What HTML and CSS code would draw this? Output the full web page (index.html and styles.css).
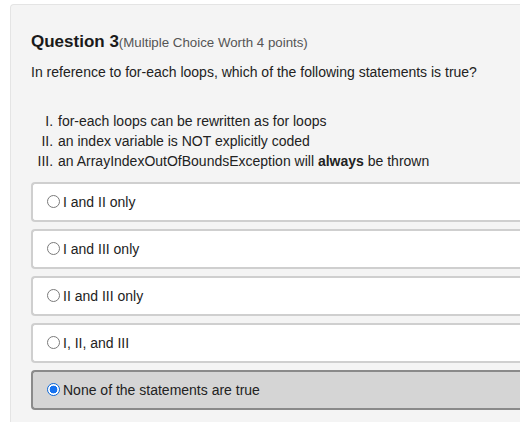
FILE: index.html
```html
<!DOCTYPE html>
<html>
<head>
<meta charset="utf-8">
<link rel="stylesheet" href="styles.css">
</head>
<body>
<div class="panel">
  <h2 class="title">Question 3<span class="meta">(Multiple Choice Worth 4 points)</span></h2>
  <p class="prompt">In reference to for-each loops, which of the following statements is true?</p>
  <ol class="statements">
    <li>for-each loops can be rewritten as for loops</li>
    <li>an index variable is NOT explicitly coded</li>
    <li>an ArrayIndexOutOfBoundsException will <b>always</b> be thrown</li>
  </ol>
  <div class="options">
    <label class="option"><span class="radio"></span>I and II only</label>
    <label class="option"><span class="radio"></span>I and III only</label>
    <label class="option"><span class="radio"></span>II and III only</label>
    <label class="option"><span class="radio"></span>I, II, and III</label>
    <label class="option selected"><span class="radio checked"></span>None of the statements are true</label>
  </div>
</div>
</body>
</html>
```
FILE: styles.css
```css
html, body {
  margin: 0;
  padding: 0;
  background: #ffffff;
  overflow: hidden;
  width: 520px;
  height: 422px;
}
body {
  font-family: "Liberation Sans", Arial, sans-serif;
  color: #222;
}
.panel {
  margin: 4px 0 0 10px;
  width: 510px;
  height: 418px;
  box-sizing: border-box;
  background: #f4f4f4;
  border: 1px solid #e4e4e4;
  border-right: none;
  border-bottom: none;
  border-radius: 4px 0 0 0;
  padding: 27px 0 0 20px;
  overflow: hidden;
}
.title {
  margin: 0;
  font-size: 17px;
  font-weight: bold;
  color: #1a1a1a;
  line-height: 20px;
}
.meta {
  font-size: 13.3px;
  font-weight: normal;
  color: #555;
}
.prompt {
  margin: 9px 0 0 0;
  font-size: 14px;
  line-height: 20px;
  color: #222;
}
.statements {
  list-style: upper-roman;
  margin: 29px 0 0 0;
  padding-left: 26px;
  font-size: 14px;
  line-height: 20px;
  color: #222;
}
.statements li {
  padding-left: 1px;
}
.statements b {
  font-weight: bold;
}
.options {
  display: flex;
  flex-direction: column;
  gap: 7px;
  margin-top: 11px;
}
.option {
  display: flex;
  align-items: center;
  height: 40px;
  box-sizing: border-box;
  background: #fff;
  border: 2px solid #cfcfcf;
  border-right: none;
  border-radius: 4px 0 0 4px;
  padding-left: 14px;
  font-size: 14px;
  color: #222;
}
.option.selected {
  background: #d5d5d5;
  border-color: #8a8a8a;
}
.radio {
  width: 13px;
  height: 13px;
  box-sizing: border-box;
  border: 1px solid #7a7a7a;
  border-radius: 50%;
  background: #fff;
  margin-right: 3px;
  margin-bottom: 2px;
}
.radio.checked {
  border: 1px solid #0a66d8;
  background: radial-gradient(circle, #1672f0 0, #1672f0 3.6px, #fff 4.2px);
  box-shadow: inset 0 0 0 1px #fff;
}
```
